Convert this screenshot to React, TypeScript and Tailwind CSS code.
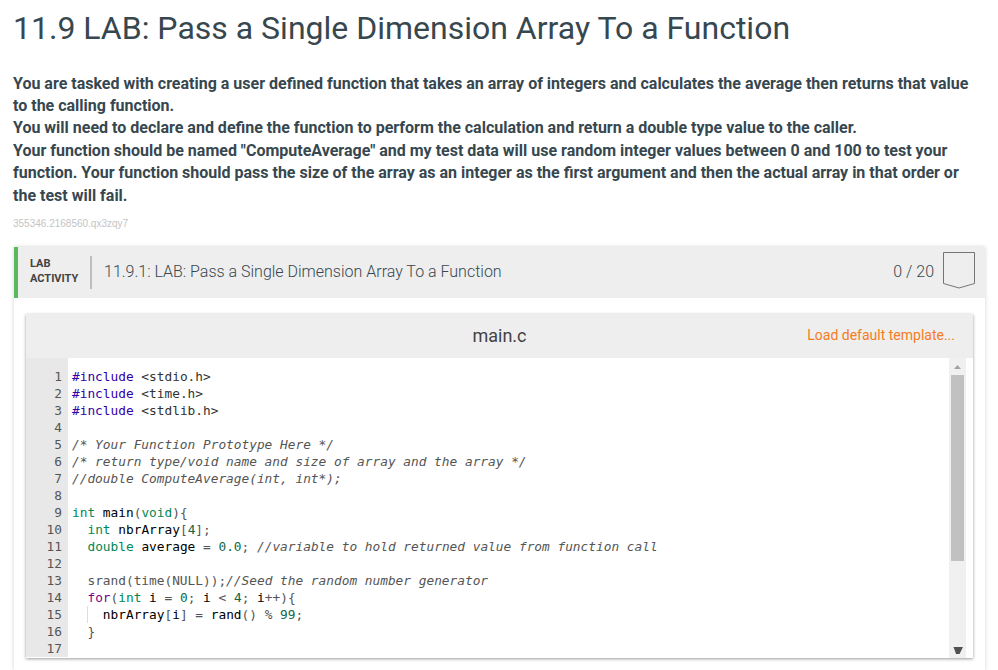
const kw = "text-[#708]";
const def = "text-[#000]";
const ty = "text-[#085]";
const num = "text-[#164]";
const com = "italic text-[#555]";
const pun = "text-[#555]";

type Tok = [string, string?];

const lines: Tok[][] = [
  [["#include", "text-[#30a]"], [" "], ["<stdio.h>", "text-[#333]"]],
  [["#include", "text-[#30a]"], [" "], ["<time.h>", "text-[#333]"]],
  [["#include", "text-[#30a]"], [" "], ["<stdlib.h>", "text-[#333]"]],
  [],
  [["/* Your Function Prototype Here */", com]],
  [["/* return type/void name and size of array and the array */", com]],
  [["//double ComputeAverage(int, int*);", com]],
  [],
  [["int", ty], [" "], ["main", def], ["(", pun], ["void", ty], ["){", pun]],
  [["  "], ["int", ty], [" "], ["nbrArray", def], ["[", pun], ["4", num], ["];", pun]],
  [["  "], ["double", ty], [" "], ["average", def], [" = ", pun], ["0.0", num], ["; ", pun], ["//variable to hold returned value from function call", com]],
  [],
  [["  "], ["srand(time(NULL));", pun], ["//Seed the random number generator", com]],
  [["  "], ["for", kw], ["(", pun], ["int", ty], [" "], ["i", def], [" = ", pun], ["0", num], ["; ", pun], ["i", def], [" < ", pun], ["4", num], ["; ", pun], ["i", def], ["++){", pun]],
  [["    "], ["nbrArray", def], ["[", pun], ["i", def], ["] = ", pun], ["rand", def], ["() % ", pun], ["99", num], [";", pun]],
  [["  "], ["}", pun]],
  [],
];

function CodeLine({ toks, n }: { toks: Tok[]; n: number }) {
  return (
    <div className="flex h-[17px]">
      <div className="w-[42px] shrink-0 bg-[#e8e8e8] pr-[6px] text-right text-[#555]">{n}</div>
      <div className="relative whitespace-pre pl-[4px]">
        {n === 15 && <span className="absolute left-[19px] top-0 h-[17px] w-px bg-[#ddd]" />}
        {toks.map((t, i) => (
          <span key={i} className={t[1]}>{t[0]}</span>
        ))}
      </div>
    </div>
  );
}

export default function App() {
  return (
    <div className="h-[670px] w-[998px] overflow-hidden bg-white font-['Roboto',sans-serif] text-[#37474f]">
      <div className="pl-[14px] pr-[13px]">
        <h1 className="-ml-[1px] pt-[8px] text-[32px] leading-[40px] font-normal">11.9 LAB: Pass a Single Dimension Array To a Function</h1>

        <div className="-ml-[1px] mt-[24.6px] text-[16px] leading-[22.4px] font-bold">
          <p>You are tasked with creating a user defined function that takes an array of integers and calculates the average then returns that value to the calling function.</p>
          <p>You will need to declare and define the function to perform the calculation and return a double type value to the caller.</p>
          <p>Your function should be named "ComputeAverage" and my test data will use random integer values between 0 and 100 to test your function. Your function should pass the size of the array as an integer as the first argument and then the actual array in that order or the test will fail.</p>
        </div>

        <div className="-ml-[1px] mt-[11px] font-['Liberation_Sans',sans-serif] text-[10px] leading-[12px] text-[#c4c4c4]">355346.2168560.qx3zqy7</div>

        <section className="mt-[17px] shadow-[0_0_4px_rgba(0,0,0,0.18)]">
          <header className="flex h-[51px] items-center border-l-4 border-[#5cb85c] bg-[#eeeeee]">
            <div className="ml-[12px] -mt-[3px] w-[52px] text-[11px] leading-[15px] font-bold text-[#424242]">LAB<br />ACTIVITY</div>
            <div className="ml-[8px] -mt-[1px] h-[33px] w-[2px] bg-[#bdbdbd]" />
            <div className="ml-[12px] -mt-[1px] text-[16px] font-light">11.9.1: LAB: Pass a Single Dimension Array To a Function</div>
            <div className="mr-[10px] ml-auto flex items-center gap-[9px]">
              <span className="-mt-[1px] text-[16px] font-light">0 / 20</span>
              <svg width="32" height="37" viewBox="0 0 32 37" className="-mt-[4px]">
                <path d="M.5.5h31v31L16 36 .5 31.5z" fill="none" stroke="#757575" />
              </svg>
            </div>
          </header>

          <div className="px-[12px] pt-[16px] pb-[12px]">
            <div className="shadow-[0_1px_3px_rgba(0,0,0,0.4)]">
              <div className="relative flex h-[44px] items-center justify-center bg-[#eeeeee] text-[18px] font-normal text-[#424242]">
                <span className="-mt-[2px]">main.c</span>
                <button className="absolute right-[18px] top-[11px] text-[14px] leading-[20px] text-[#f57c22]">Load default template...</button>
              </div>
              <div className="flex h-[300px] overflow-hidden bg-white">
                <div className="flex-1 overflow-hidden font-['DejaVu_Sans_Mono',monospace] text-[12.8px] leading-[17px]">
                  <div className="h-[10px] w-[42px] bg-[#e8e8e8]" />
                  {lines.map((toks, i) => (
                    <CodeLine key={i} toks={toks} n={i + 1} />
                  ))}
                </div>
                <div className="mr-[7px] flex w-[17px] flex-col items-center bg-[#f0f0f0]">
                  <svg width="17" height="17" viewBox="0 0 17 17" className="shrink-0">
                    <path d="M5 11l3.5-4 3.5 4z" fill="#a3a3a3" />
                  </svg>
                  <div className="h-[186px] w-[13px] bg-[#c1c1c1]" />
                  <svg width="17" height="17" viewBox="0 0 17 17" className="mt-auto shrink-0">
                    <path d="M4.5 6H14l-3.5 7H7l-1-3z" fill="#505050" />
                  </svg>
                </div>
              </div>
            </div>
          </div>
        </section>
      </div>
    </div>
  );
}
